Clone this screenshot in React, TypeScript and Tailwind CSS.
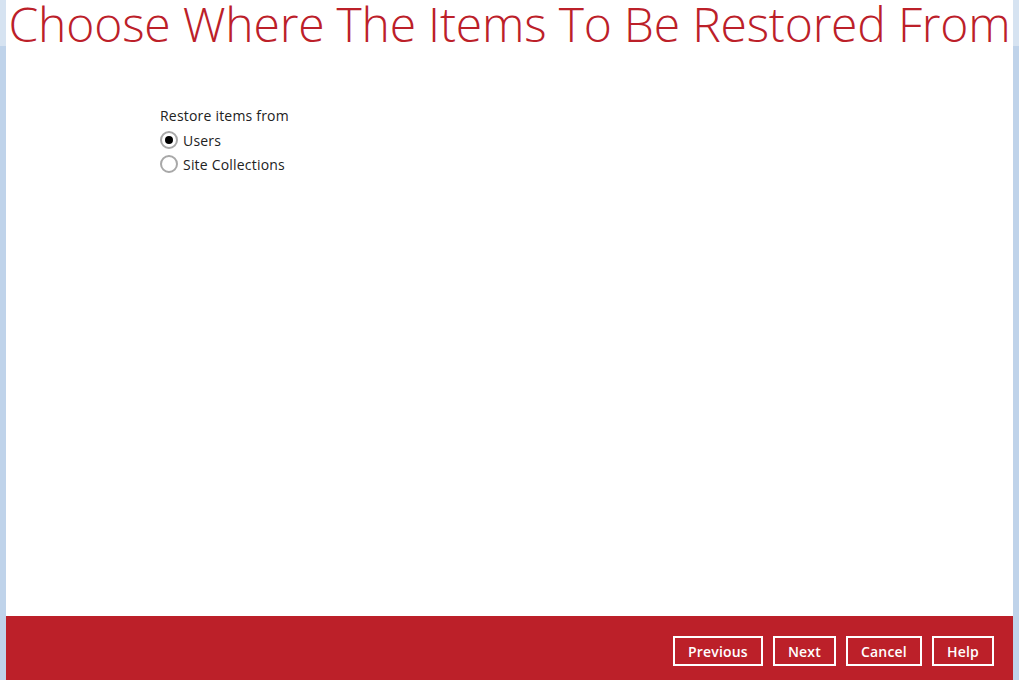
import { useState } from 'react'

const buttons = ['Previous', 'Next', 'Cancel', 'Help']

function Radio({ checked, label, onClick }: { checked: boolean; label: string; onClick: () => void }) {
  return (
    <label className="flex items-center gap-[5px] h-6 cursor-pointer" onClick={onClick}>
      <span className="w-[18px] h-[18px] rounded-full border-2 border-[#a8a8a8] bg-white flex items-center justify-center">
        {checked && <span className="w-2 h-2 rounded-full bg-black" />}
      </span>
      <span className="text-[14px] text-[#222] tracking-[0.2px]">{label}</span>
    </label>
  )
}

export default function App() {
  const [source, setSource] = useState('users')

  return (
    <div className="h-[680px] w-[1019px] flex flex-col bg-[#bfd3ea] font-['Open_Sans',sans-serif]">
      {/* Title bar */}
      <div className="h-[46px] bg-[#d6e3f1] px-[6px] shrink-0">
        <div className="h-full bg-white flex justify-center">
          <h1 className="text-[48px] font-light text-[#bc2029] leading-[48px] whitespace-nowrap tracking-[-0.2px]">
            Choose Where The Items To Be Restored From
          </h1>
        </div>
      </div>

      {/* Body */}
      <div className="flex-1 mx-[6px] bg-white pl-[154px] pt-[59px]">
        <p className="text-[14px] text-[#222] tracking-[0.2px] leading-[22px] mb-[1px]">Restore items from</p>
        <Radio checked={source === 'users'} label="Users" onClick={() => setSource('users')} />
        <Radio checked={source === 'sites'} label="Site Collections" onClick={() => setSource('sites')} />
      </div>

      {/* Footer */}
      <div className="h-16 mx-[6px] bg-[#bc2029] flex items-start justify-end gap-[10px] pr-[19px] pt-5 shrink-0">
        {buttons.map(b => (
          <button
            key={b}
            className="h-[30px] px-[13px] border-2 border-white text-white text-[14px] font-semibold tracking-[0.2px]"
          >
            {b}
          </button>
        ))}
      </div>
    </div>
  )
}
